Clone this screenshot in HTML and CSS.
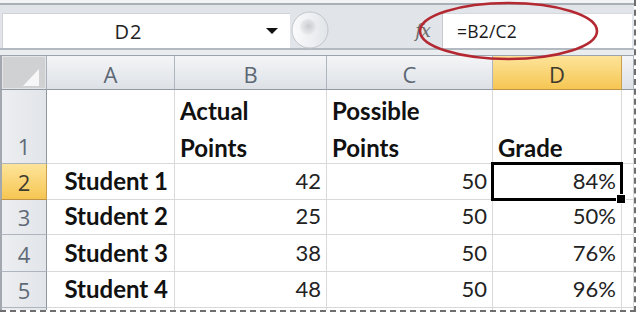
FILE: index.html
```html
<!DOCTYPE html>
<html>
<head>
<meta charset="utf-8">
<link rel="stylesheet" href="styles.css">
</head>
<body>
<div class="frame">
  <div class="top"></div>
  <div class="fbar">
    <div class="namebox">
      <span class="name">D2</span>
      <span class="caret"><svg width="12" height="6" viewBox="0 0 12 6"><path d="M0 0H12L6 6Z" fill="#111"/></svg></span>
    </div>
    <div class="mid">
      <svg class="knob" width="40" height="38" viewBox="0 0 40 38">
        <defs>
          <linearGradient id="kg" x1="0" x2="1" y1="0" y2="0">
            <stop offset="0" stop-color="#fbfbfc"/>
            <stop offset="0.6" stop-color="#eceef1"/>
            <stop offset="1" stop-color="#e1e4e8"/>
          </linearGradient>
          <radialGradient id="ki" cx="0.55" cy="0.45" r="0.6">
            <stop offset="0" stop-color="#c9cbcf"/>
            <stop offset="1" stop-color="#eef0f2"/>
          </radialGradient>
        </defs>
        <circle cx="20" cy="19" r="18" fill="url(#kg)" stroke="#c2c6cc" stroke-width="1"/>
        <circle cx="18" cy="16" r="8" fill="url(#ki)"/>
      </svg>
      <span class="fx">fx</span>
    </div>
    <div class="input">=B2/C2</div>
  </div>
  <div class="gap"></div>
  <div class="sheet">
    <div class="corner"><svg width="47" height="34" viewBox="0 0 47 34"><path d="M21 30H37V13Z" fill="#f7f7f7"/></svg></div>
    <div class="h">A</div>
    <div class="h">B</div>
    <div class="h">C</div>
    <div class="h sel">D</div>
    <div class="h"></div>

    <div class="rh">1</div>
    <div class="c"></div>
    <div class="c two"><span>Actual</span><span>Points</span></div>
    <div class="c two"><span>Possible</span><span>Points</span></div>
    <div class="c two"><span>Grade</span></div>
    <div class="c"></div>

    <div class="rh sel">2</div>
    <div class="c lab">Student 1</div>
    <div class="c num">42</div>
    <div class="c num">50</div>
    <div class="c num active">84%</div>
    <div class="c"></div>

    <div class="rh">3</div>
    <div class="c lab">Student 2</div>
    <div class="c num">25</div>
    <div class="c num">50</div>
    <div class="c num">50%</div>
    <div class="c"></div>

    <div class="rh">4</div>
    <div class="c lab">Student 3</div>
    <div class="c num">38</div>
    <div class="c num">50</div>
    <div class="c num">76%</div>
    <div class="c"></div>

    <div class="rh">5</div>
    <div class="c lab">Student 4</div>
    <div class="c num">48</div>
    <div class="c num">50</div>
    <div class="c num">96%</div>
    <div class="c"></div>

    <div class="rh"></div>
    <div class="c"></div>
    <div class="c"></div>
    <div class="c"></div>
    <div class="c"></div>
    <div class="c"></div>
  </div>
  <svg class="ring" width="182" height="60" viewBox="0 0 182 60"><ellipse cx="90.5" cy="30" rx="88.5" ry="28" fill="none" stroke="#b42832" stroke-width="2.6"/></svg>
</div>
</body>
</html>
```
FILE: styles.css
```css
* { box-sizing: border-box; }
html, body { margin: 0; padding: 0; background: #fff; }
body { width: 640px; height: 315px; overflow: hidden; font-family: "Open Sans", "DejaVu Sans", sans-serif; }

.frame {
  position: relative;
  width: 636px;
  height: 312px;
  border-right: 2px dashed #6e6e6e;
  border-bottom: 2px dashed #6e6e6e;
  overflow: hidden;
  background: #fff;
}

.top { height: 3px; background: #f2f3f5; }

.fbar {
  display: flex;
  height: 47px;
  border-top: 2px solid #a9afb7;
  border-bottom: 2px solid #b3b9c1;
  background: #e1e4e8;
  padding-top: 8px;
}

.namebox {
  width: 288px;
  margin-left: 2px;
  background: #fff;
  border: 1px solid #cfd3d8;
  border-right: none;
  border-bottom: none;
  display: flex;
  align-items: center;
}
.name { flex: 1; text-align: center; font-size: 20px; letter-spacing: 1px; color: #222; }
.caret { width: 36px; display: flex; justify-content: center; align-items: center; }

.mid {
  width: 152px;
  display: flex;
  align-items: center;
  justify-content: space-between;
  padding-right: 12px;
}
.knob { display: block; margin-top: -2px; }
.fx {
  font-family: "DejaVu Serif", serif;
  font-style: italic;
  font-size: 18px;
  color: #6b6b6b;
  letter-spacing: -1px;
}

.input {
  flex: 1;
  margin-right: 2px;
  background: #fff;
  border-left: 1px solid #c6cad0;
  border-top: 1px solid #d6d9dd;
  padding-left: 14px;
  font-size: 17.5px;
  letter-spacing: 0.2px;
  color: #1a1a1a;
  display: flex;
  align-items: center;
}

.gap { height: 5px; background: #eaedf0; }

.sheet {
  display: grid;
  grid-template-columns: 47px 128px 152px 166px 129px 12px;
  grid-template-rows: 35px 74px 36px 35px 37px 36px 10px;
}

.corner {
  background: #d0d1d3;
  border-left: 2px solid #a3a8ae;
  border-top: 1px solid #9ca3ac;
  border-bottom: 1px solid #8f98a3;
  border-right: 1px solid #a9b0b9;
  box-shadow: inset 0 0 0 1px #e3e4e6;
}
.corner svg { display: block; }

.h {
  background: linear-gradient(#f4f5f7, #dde1e6);
  border-top: 1px solid #9ca3ac;
  border-right: 1px solid #aeb5be;
  border-bottom: 1px solid #8f98a3;
  color: #5d6774;
  font-size: 22px;
  display: flex;
  align-items: center;
  justify-content: center;
  padding-top: 2px;
}

.rh {
  background: linear-gradient(90deg, #eceef1, #e2e5e9);
  border-left: 2px solid #a3a8ae;
  border-right: 1px solid #8f98a3;
  border-bottom: 1px solid #aeb5be;
  color: #5f6a78;
  font-size: 22px;
  line-height: 30px;
  display: flex;
  align-items: flex-end;
  justify-content: center;
  padding-bottom: 2px;
}

.h.sel, .rh.sel {
  background: linear-gradient(#fde49a, #f6c653);
  color: #3e3a2e;
  border-right-color: #c8a050;
  border-bottom-color: #c09246;
}

.c {
  border-right: 1px solid #d9d9d9;
  border-bottom: 1px solid #d9d9d9;
  font-family: Lato, "Open Sans", sans-serif;
  color: #111;
  display: flex;
  align-items: flex-end;
}

.two {
  flex-direction: column;
  justify-content: flex-end;
  align-items: flex-start;
  gap: 7px;
  padding-left: 5px;
  font-weight: 700;
  font-size: 24px;
  line-height: 30px;
}

.lab {
  justify-content: flex-end;
  padding-right: 6px;
  padding-bottom: 3px;
  font-weight: 700;
  font-size: 24px;
  line-height: 30px;
}

.num {
  justify-content: flex-end;
  padding-right: 5px;
  padding-bottom: 3px;
  font-size: 22px;
  line-height: 30px;
  color: #222;
}

.active { position: relative; }
.active::after {
  content: "";
  position: absolute;
  left: -2px;
  top: -2px;
  right: -2px;
  bottom: -2px;
  border: 3px solid #000;
}
.active::before {
  content: "";
  position: absolute;
  right: -5px;
  bottom: -5px;
  width: 8px;
  height: 8px;
  background: #000;
  border: 1px solid #fff;
  z-index: 2;
}

.ring {
  position: absolute;
  left: 418px;
  top: 1px;
}
```
